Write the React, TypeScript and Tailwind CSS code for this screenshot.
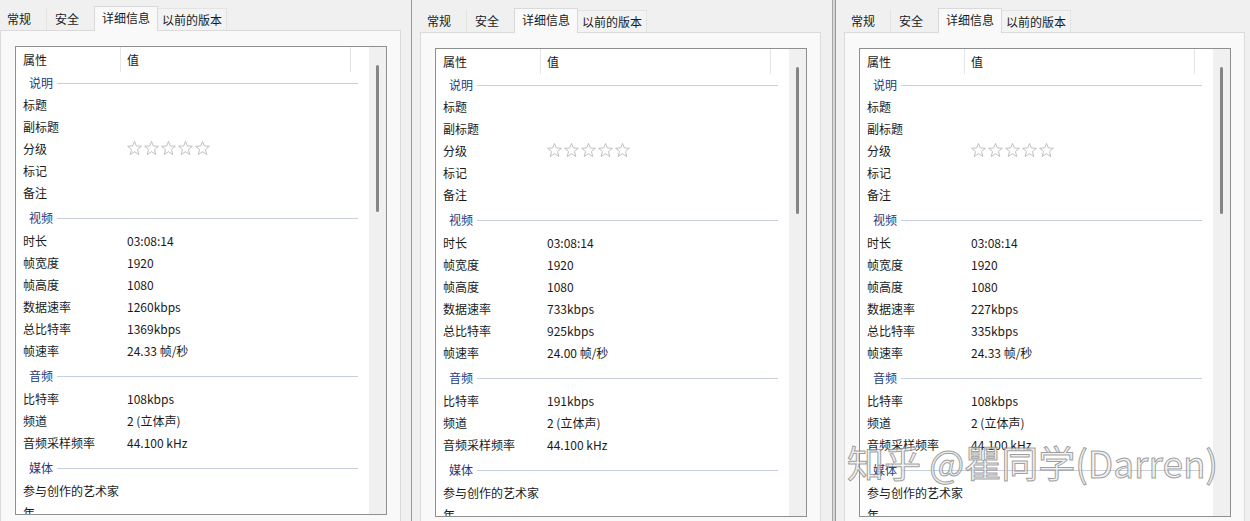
import React from 'react';

type Item = { group: string; first?: boolean } | { k: string; v?: string; stars?: boolean };

function buildRows(v: string[]): Item[] {
  return [
    { group: '说明', first: true },
    { k: '标题' },
    { k: '副标题' },
    { k: '分级', stars: true },
    { k: '标记' },
    { k: '备注' },
    { group: '视频' },
    { k: '时长', v: v[0] },
    { k: '帧宽度', v: v[1] },
    { k: '帧高度', v: v[2] },
    { k: '数据速率', v: v[3] },
    { k: '总比特率', v: v[4] },
    { k: '帧速率', v: v[5] },
    { group: '音频' },
    { k: '比特率', v: v[6] },
    { k: '频道', v: v[7] },
    { k: '音频采样频率', v: v[8] },
    { group: '媒体' },
    { k: '参与创作的艺术家' },
    { k: '年' },
  ];
}

function Star() {
  return (
    <svg width="15" height="15" viewBox="0 0 14 14">
      <polygon
        points="7,0.4 8.7,4.65 13.4,4.95 9.76,7.9 11,12.6 7,10 3,12.6 4.24,7.9 0.6,4.95 5.3,4.65"
        fill="#fff"
        stroke="#bdbdbd"
        strokeWidth="0.9"
        strokeLinejoin="round"
      />
    </svg>
  );
}

function Tabs() {
  return (
    <div className="flex h-[30px] items-end text-[12px] text-[#1a1a1a]">
      <div className="flex h-[22px] w-[47px] items-center pl-[7px] border-r border-[#e3e3e3]">常规</div>
      <div className="flex h-[22px] w-[47px] items-center pl-[8px]">安全</div>
      <div className="relative z-10 -mb-px flex h-[25px] w-[64px] items-center justify-center border border-b-0 border-[#d9d9d9] bg-[#f9f9f9] pb-[3px]">
        详细信息
      </div>
      <div className="flex h-[22px] w-[69px] items-center justify-center border-t border-r border-[#e3e3e3] bg-[#f3f3f3]">
        以前的版本
      </div>
    </div>
  );
}

function Panel({ values, ml, w, pt }: { values: string[]; ml: string; w: string; pt: string }) {
  const rows = buildRows(values);
  return (
    <div className={`${w} ${pt} ${ml} shrink-0`}>
      <Tabs />
      <div className="h-[500px] w-[401px] border border-[#dadada] bg-[#f9f9f9] pl-[14px] pt-[15px]">
        <div className="flex h-[469px] w-[372px] overflow-hidden border border-[#8f8f8f] bg-white">
          <div className="w-[353px] shrink-0">
            <div className="flex h-[25px] items-center text-[12px] text-[#1a1a1a]">
              <div className="flex h-full w-[105px] items-center border-r border-[#e5e5e5] pl-[7px]">属性</div>
              <div className="flex h-full w-[230px] items-center border-r border-[#e5e5e5] pl-[6px]">值</div>
            </div>
            {rows.map((r, i) =>
              'group' in r ? (
                <div
                  key={i}
                  className={`flex items-center pl-[13px] pr-[11px] text-[12px] text-[#1d3a80] ${r.first ? 'h-[22px]' : 'h-[26px] pt-[2px]'}`}
                >
                  <span>{r.group}</span>
                  <div className="ml-[4px] h-px flex-1 bg-[#c6cfdb]" />
                </div>
              ) : (
                <div key={i} className="flex h-[22px] items-center text-[12px] text-[#1a1a1a]">
                  <div className="w-[111px] shrink-0 pl-[7px] whitespace-nowrap">{r.k}</div>
                  {r.stars ? (
                    <div className="flex gap-[2px] -mt-px">
                      <Star />
                      <Star />
                      <Star />
                      <Star />
                      <Star />
                    </div>
                  ) : (
                    <div className="whitespace-nowrap">{r.v}</div>
                  )}
                </div>
              ),
            )}
          </div>
          <div className="flex h-full w-[17px] justify-center bg-[#f0f0f0] pt-[18px]">
            <div className="h-[147px] w-[3px] rounded-full bg-[#858585]" />
          </div>
        </div>
      </div>
    </div>
  );
}

export default function App() {
  return (
    <div className="relative flex h-[521px] w-[1250px] overflow-hidden bg-[#f0f0f0] font-['Noto_Sans_CJK_SC',sans-serif]">
      <Panel
        values={['03:08:14', '1920', '1080', '1260kbps', '1369kbps', '24.33 帧/秒', '108kbps', '2 (立体声)', '44.100 kHz']}
        ml="ml-0"
        w="w-[411px]"
        pt="pt-0"
      />
      <div className="h-full w-px shrink-0 bg-[#9a9a9a]" />
      <Panel
        values={['03:08:14', '1920', '1080', '733kbps', '925kbps', '24.00 帧/秒', '191kbps', '2 (立体声)', '44.100 kHz']}
        ml="pl-[8px]"
        w="w-[420px]"
        pt="pt-[2px]"
      />
      <div className="flex h-full w-[4px] shrink-0">
        <div className="h-full w-px bg-[#a8a8a8]" />
        <div className="h-full w-[2px] bg-[#d6d6d6]" />
        <div className="h-full w-px bg-[#9a9a9a]" />
      </div>
      <Panel
        values={['03:08:14', '1920', '1080', '227kbps', '335kbps', '24.33 帧/秒', '108kbps', '2 (立体声)', '44.100 kHz']}
        ml="pl-[8px]"
        w="w-[414px]"
        pt="pt-[2px]"
      />
      <div className="pointer-events-none absolute left-[847px] top-[444px] whitespace-nowrap text-[37px] leading-none text-[rgba(235,235,235,0.7)] [-webkit-text-stroke:1px_rgba(120,120,120,0.7)]">
        知乎 @瞿同学(Darren)
      </div>
    </div>
  );
}
